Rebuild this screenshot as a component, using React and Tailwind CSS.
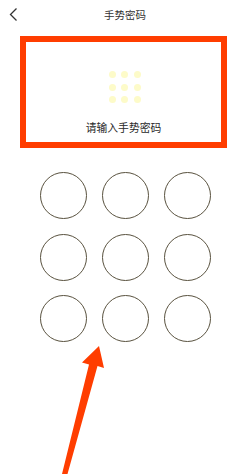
import React from 'react';

export default function App() {
    const dots = Array.from({ length: 9 });
    return (
        <div className="relative w-[250px] h-[474px] overflow-hidden bg-white" style={{ fontFamily: '"Noto Sans CJK SC", "Noto Sans", sans-serif' }}>
            {/* header */}
            <div className="relative h-[30px] flex items-center justify-center">
                <svg className="absolute left-[7px] top-[6px]" width="14" height="18" viewBox="0 0 14 18">
                    <polyline points="9.5,2.5 3.5,8.5 9.5,14.5" fill="none" stroke="#333" strokeWidth="1.3" />
                </svg>
                <span className="text-[10.5px] text-[#333] leading-none">手势密码</span>
            </div>

            {/* preview box */}
            <div className="ml-[20px] mt-[6px] w-[207px] h-[112px] border-[6px] border-[#ff3d00] flex flex-col items-center">
                <div className="mt-[29px] grid grid-cols-3 gap-x-[5.5px] gap-y-[5.5px] ml-[2px]">
                    {dots.map((_, i) => (
                        <div key={i} className="w-[7px] h-[7px] rounded-full bg-[#fdfbc9]" />
                    ))}
                </div>
                <div className="mt-[19px] text-[10.8px] text-[#2a2a2a] leading-none">请输入手势密码</div>
            </div>

            {/* gesture pad */}
            <div className="ml-[40px] mt-[24px] grid grid-cols-3 w-[171px] gap-x-[15px] gap-y-[14.5px]">
                {dots.map((_, i) => (
                    <div key={i} className="w-[47px] h-[47px] rounded-full border-[1.3px] border-[#59523f]" />
                ))}
            </div>

            {/* annotation arrow */}
            <svg className="absolute left-0 top-0" width="250" height="474" viewBox="0 0 250 474">
                <polygon points="99,346 104,368 97.5,366 67.5,474 62,474 89,364.5 82,362.5" fill="#ff3d00" />
            </svg>
        </div>
    );
}
